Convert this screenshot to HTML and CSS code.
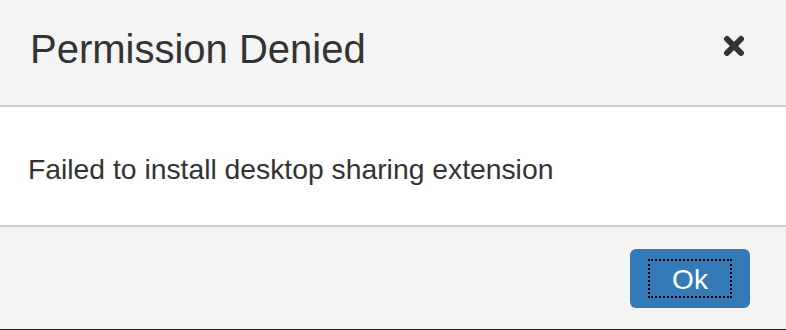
FILE: index.html
```html
<!DOCTYPE html>
<html>
<head>
<meta charset="utf-8">
<link rel="stylesheet" href="styles.css">
</head>
<body>
<div class="modal">
  <div class="modal-header">
    <h4 class="modal-title">Permission Denied</h4>
    <button class="close" aria-label="Close">
      <svg width="24" height="22" viewBox="0 0 24 22"><path d="M5 4 L19 18 M19 4 L5 18" stroke="#333" stroke-width="6" stroke-linecap="round"/></svg>
    </button>
  </div>
  <div class="modal-body">Failed to install desktop sharing extension</div>
  <div class="modal-footer">
    <button class="btn"><span class="focus">Ok</span></button>
  </div>
</div>
</body>
</html>
```
FILE: styles.css
```css
html, body {
  margin: 0;
  padding: 0;
  background: #f4f4f4;
}
.modal {
  width: 786px;
  height: 330px;
  display: flex;
  flex-direction: column;
  font-family: "Liberation Sans", Arial, sans-serif;
  color: #333;
  box-sizing: border-box;
  border-bottom: 1px solid #222;
}
.modal-header {
  height: 107px;
  box-sizing: border-box;
  padding: 29px 40px 0 30px;
  background: #f4f4f4;
  border-bottom: 2px solid #cccccc;
  display: flex;
  justify-content: space-between;
  align-items: flex-start;
}
.modal-title {
  margin: 0;
  font-size: 40px;
  font-weight: normal;
  line-height: 40px;
}
.close {
  margin-top: 6px;
  padding: 0;
  border: 0;
  background: none;
  width: 24px;
  height: 22px;
  display: block;
}
.close svg { display: block; }
.modal-body {
  height: 120px;
  box-sizing: border-box;
  padding: 48px 28px 0 28px;
  background: #fff;
  border-bottom: 2px solid #cccccc;
  font-size: 28.3px;
  line-height: 28px;
}
.modal-footer {
  flex: 1;
  background: #f4f4f4;
  display: flex;
  justify-content: flex-end;
  align-items: flex-start;
  padding: 22px 36px 0 0;
}
.btn {
  width: 120px;
  height: 59px;
  background: #337ab7;
  border: 0;
  border-radius: 6px;
  color: #fff;
  font-family: "Liberation Sans", Arial, sans-serif;
  font-size: 28px;
  padding: 0;
  display: flex;
  align-items: center;
  justify-content: center;
}
.focus {
  width: 84px;
  height: 39px;
  box-sizing: border-box;
  border: 2px dotted #000;
  display: flex;
  align-items: center;
  justify-content: center;
  line-height: 28px;
  padding-top: 2px;
}
```
